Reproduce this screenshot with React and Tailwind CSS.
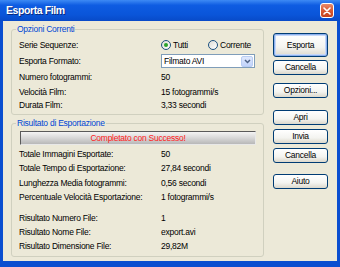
import React from "react";

const Row = ({ label, h, children }) => (
  <div className={`flex items-center ${h}`}>
    <span className="w-[142px] shrink-0 whitespace-nowrap">{label}</span>
    <div className="flex items-center whitespace-nowrap">{children}</div>
  </div>
);

const Radio = ({ checked, label, w }) => (
  <div className={`flex items-center ${w}`}>
    <span className="w-[10px] h-[10px] rounded-full border border-[#1c5180] bg-[linear-gradient(135deg,#dcdcd6,#ffffff)] flex items-center justify-center">
      {checked && <span className="w-[4px] h-[4px] rounded-full bg-[#2aa22a]" />}
    </span>
    <span className="ml-[2px]">{label}</span>
  </div>
);

const Btn = ({ label, h, mt, isDefault }) => (
  <div
    className={`w-[55px] ${h} ${mt} flex items-center justify-center rounded-[3px] border border-[#003c74] bg-[linear-gradient(180deg,#ffffff_0%,#f4f4f0_60%,#dcd8cc_100%)] ${
      isDefault ? "shadow-[inset_0_0_0_1px_#8cb0ee,inset_0_0_0_2px_#c6d8f8]" : ""
    }`}
  >
    {label}
  </div>
);

export default function App() {
  return (
    <div className="w-[340px] h-[267px] flex flex-col bg-[#0a4ed0] font-['Liberation_Sans',Arial,sans-serif] text-[8.5px] tracking-[-0.25px] leading-[11px] text-black overflow-hidden">
      {/* title bar */}
      <div className="h-[21px] shrink-0 flex items-center justify-between pl-[6px] pr-[6px] bg-[linear-gradient(180deg,#3d8af4_0%,#0e5ce2_25%,#0a55d9_70%,#084ac8_100%)]">
        <span className="text-white font-bold text-[10.5px] tracking-[-0.4px] [text-shadow:1px_1px_0_#0a2a80]">
          Esporta Film
        </span>
        <div className="w-[14px] h-[15px] rounded-[3px] border border-white bg-[linear-gradient(180deg,#e88a6c_0%,#d85a34_50%,#c2401c_100%)] flex items-center justify-center">
          <svg width="8" height="8" viewBox="0 0 8 8">
            <path d="M1 1L7 7M7 1L1 7" stroke="white" strokeWidth="1.6" strokeLinecap="round" />
          </svg>
        </div>
      </div>

      {/* body */}
      <div className="flex-1 flex mx-[3px] mb-[6px] bg-[#ece9d8] pl-[8px] pr-[9px] pt-[3px]">
        <div className="w-[253px] shrink-0 flex flex-col">
          <fieldset className="border border-[#d0d0bf] rounded-[3px] px-[7px] pt-[2px] pb-[2px]">
            <legend className="ml-[-3px] px-[1px] text-[#0046d5]">Opzioni Correnti</legend>
            <Row label="Serie Sequenze:" h="h-[16px]">
              <Radio checked label="Tutti" w="w-[47px]" />
              <Radio label="Corrente" w="w-[48px]" />
            </Row>
            <Row label="Esporta Formato:" h="h-[16px]">
              <div className="w-[94px] h-[14px] border border-[#7f9db9] bg-white flex items-center justify-between pl-[2px] pr-[1px]">
                <span>Filmato AVI</span>
                <span className="w-[12px] h-[11px] rounded-[2px] border border-[#b9cdf3] bg-[linear-gradient(180deg,#dfe8fd_0%,#c1d3fb_100%)] flex items-center justify-center">
                  <svg width="7" height="5" viewBox="0 0 7 5">
                    <path d="M1 1L3.5 3.5L6 1" stroke="#4d6185" strokeWidth="1.5" fill="none" />
                  </svg>
                </span>
              </div>
            </Row>
            <Row label="Numero fotogrammi:" h="h-[16px]">50</Row>
            <Row label="Velocità Film:" h="h-[14px]">15 fotogrammi/s</Row>
            <Row label="Durata Film:" h="h-[13px]">3,33 secondi</Row>
          </fieldset>

          <fieldset className="mt-[3px] border border-[#d0d0bf] rounded-[3px] px-[7px] pt-[2px] pb-[3px]">
            <legend className="ml-[-3px] px-[1px] text-[#0046d5]">Risultato di Esportazione</legend>
            <div className="ml-[1px] h-[14px] flex items-center justify-center border border-t-[#5a5a5a] border-l-[#5a5a5a] border-r-[#e8e8e8] border-b-[#e8e8e8] bg-[linear-gradient(180deg,#f4f4f4_0%,#dadada_45%,#b8b8b8_100%)] text-[#ff2020]">
              Completato con Successo!
            </div>
            <div className="flex flex-col">
              <Row label="Totale Immagini Esportate:" h="h-[14.5px] mt-[2px]">50</Row>
              <Row label="Totale Tempo di Esportazione:" h="h-[14.5px]">27,84 secondi</Row>
              <Row label="Lunghezza Media fotogrammi:" h="h-[14.5px]">0,56 secondi</Row>
              <Row label="Percentuale Velocità Esportazione:" h="h-[14.5px]">1 fotogrammi/s</Row>
              <Row label="Risultato Numero File:" h="h-[14px] mt-[6px]">1</Row>
              <Row label="Risultato Nome File:" h="h-[14px]">export.avi</Row>
              <Row label="Risultato Dimensione File:" h="h-[14px]">29,82M</Row>
            </div>
          </fieldset>
        </div>

        <div className="ml-[9px] flex flex-col pt-[9px]">
          <Btn label="Esporta" h="h-[24px]" mt="mt-0" isDefault />
          <Btn label="Cancella" h="h-[15px]" mt="mt-[3px]" />
          <Btn label="Opzioni..." h="h-[15px]" mt="mt-[8px]" />
          <Btn label="Apri" h="h-[15px]" mt="mt-[12px]" />
          <Btn label="Invia" h="h-[15px]" mt="mt-[4px]" />
          <Btn label="Cancella" h="h-[15px]" mt="mt-[4px]" />
          <Btn label="Aiuto" h="h-[15px]" mt="mt-[11px]" />
        </div>
      </div>
    </div>
  );
}
